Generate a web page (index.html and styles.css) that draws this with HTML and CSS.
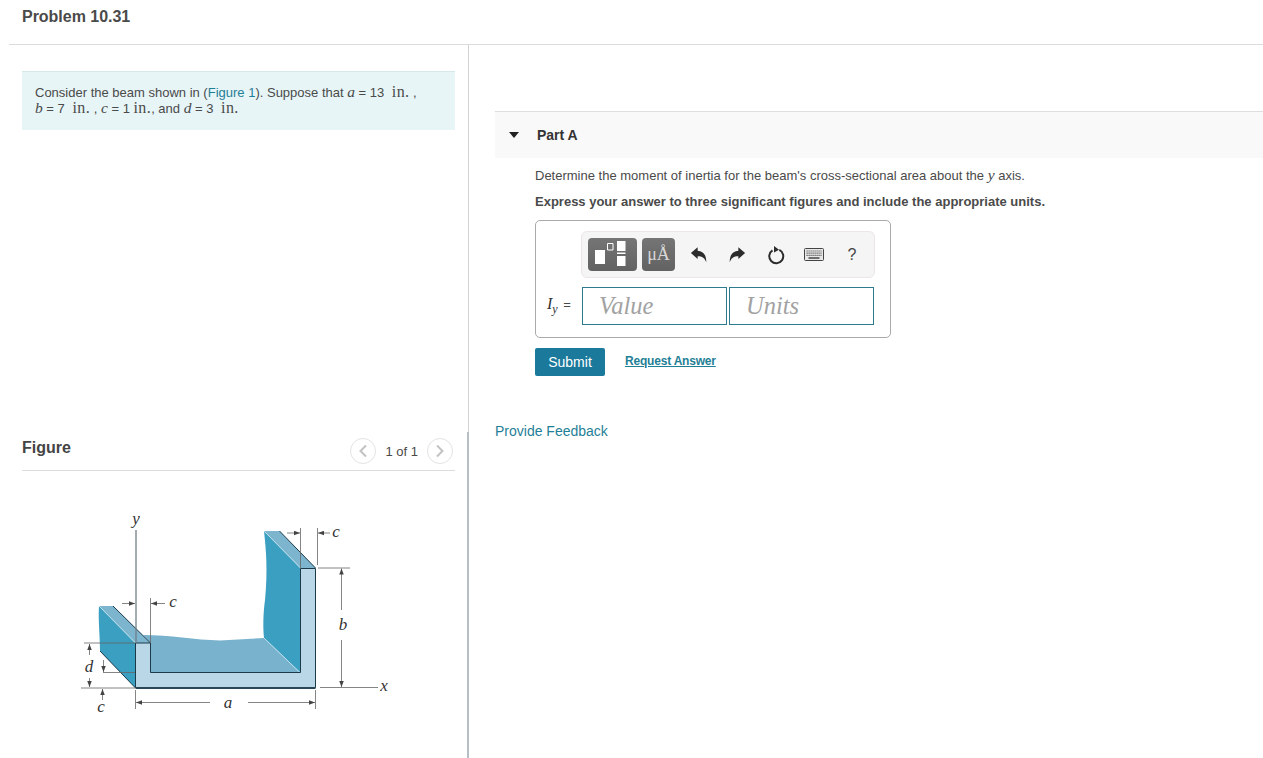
FILE: index.html
```html
<!DOCTYPE html>
<html lang="en">
<head>
<meta charset="utf-8">
<title>Problem 10.31</title>
<link rel="stylesheet" href="styles.css">
</head>
<body>
<header class="top"><h1 class="title">Problem 10.31</h1></header>
<main class="split">
  <section class="left">
    <div class="intro">
      <p class="intro-text">Consider the beam shown in (<a class="link" href="#fig">Figure 1</a>). Suppose that <i class="m">a</i> = 13 <span class="u">in.</span> ,<br><i class="m">b</i> = 7 <span class="u">in.</span> , <i class="m">c</i> = 1 <span class="u0">in.</span>, and <i class="m">d</i> = 3 <span class="u">in.</span></p>
    </div>
    <div class="figure" id="fig">
      <div class="fig-head">
        <h2 class="fig-title">Figure</h2>
        <div class="pager">
          <span class="pg-btn"><svg viewBox="0 0 10 14" class="chev"><path d="M8 1.500 2.500 7 8 12.500"/></svg></span>
          <span class="pg-text">1 of 1</span>
          <span class="pg-btn"><svg viewBox="0 0 10 14" class="chev"><path d="M2 1.500 7.500 7 2 12.500"/></svg></span>
        </div>
      </div>
      <svg class="beam" viewBox="60 500 340 225" width="340" height="225">
        <defs>
          <marker id="ah" viewBox="0 0 8 6" refX="8" refY="3" markerWidth="6" markerHeight="5" orient="auto-start-reverse" markerUnits="userSpaceOnUse"><path d="M0 0 8 3 0 6z" class="ahead"/></marker>
        </defs>
        <path class="f-dark" d="M264 531 C266 550 268 570 265 600 C263 615 263 628 264 638 L300.5 673 V568z"/>
        <path class="f-top" d="M264 531H279.5L315.5 568H300.5z"/>
        <path class="f-floor" d="M143 635 C170 635 195 640 220 640.500 L264 638 L300.500 673 H150.500 V643z"/>
        <path class="f-dark" d="M99 606 C98 620 100 635 100 651 L135.500 688 V643z"/>
        <path class="f-top" d="M99 606H113L150.500 643H135.500z"/>
        <path class="f-front" d="M135.500 643H150.500V673H300.500V568H315.500V688H135.500z"/>
        <path class="hl" d="M264 638 300.500 673M99 606 135.500 643M264 531 300.500 568"/>
        <path class="edge" d="M279.500 531 315.500 568M113 606 150.500 643M100 651 135.500 688"/>
        <path class="edge" d="M150.500 643V672.500H300.500V568.500H315.500V687.500H135.500V643H150.500"/>
        <path class="edge-b" d="M135.500 688H315.500"/>
        <path class="axis" d="M136 530V643"/>
        <path class="thin" d="M300.500 528V568M317.500 528V565M150.500 598V643M84 643H135M81 688H135M103 672.500H135M318 568H350M320 687.500H378M135.500 690V709M315.500 690V709"/>
        <path class="thin" marker-end="url(#ah)" d="M287 533H300"/>
        <path class="thin" marker-end="url(#ah)" d="M330 533H318"/>
        <path class="thin" marker-end="url(#ah)" d="M122 603.500H135"/>
        <path class="thin" marker-end="url(#ah)" d="M165 603.500H151"/>
        <path class="thin" marker-end="url(#ah)" d="M341.500 610V568.500"/>
        <path class="thin" marker-end="url(#ah)" d="M341.500 640V687"/>
        <path class="thin" marker-end="url(#ah)" d="M89.500 655V644"/>
        <path class="thin" marker-end="url(#ah)" d="M89.500 678V687"/>
        <path class="thin" marker-end="url(#ah)" d="M103.500 660V672"/>
        <path class="thin" marker-end="url(#ah)" d="M102.500 700V689"/>
        <path class="thin" marker-end="url(#ah)" d="M210 702.500H136"/>
        <path class="thin" marker-end="url(#ah)" d="M248 702.500H315"/>
        <text class="lbl" x="136" y="524" text-anchor="middle">y</text>
        <text class="lbl" x="336" y="537" text-anchor="middle">c</text>
        <text class="lbl" x="173" y="607" text-anchor="middle">c</text>
        <text class="lbl" x="343" y="630" text-anchor="middle">b</text>
        <text class="lbl" x="89" y="672" text-anchor="middle">d</text>
        <text class="lbl" x="384" y="691" text-anchor="middle">x</text>
        <text class="lbl" x="101" y="712" text-anchor="middle">c</text>
        <text class="lbl" x="228" y="708" text-anchor="middle">a</text>
      </svg>
    </div>
  </section>
  <section class="right">
    <div class="part-head">
      <span class="tri"></span>
      <h2 class="part-title">Part A</h2>
    </div>
    <div class="part-body">
      <p class="q">Determine the moment of inertia for the beam's cross-sectional area about the <i class="m">y</i> axis.</p>
      <p class="q strong">Express your answer to three significant figures and include the appropriate units.</p>
      <div class="answer">
        <div class="toolbar">
          <span class="tool-btn wide">
            <svg viewBox="0 0 49 33" width="49" height="33" class="tpl">
              <path class="w" d="M7 12h10v14H7zM29 3h8.500v10H29zM29 14.500h8.500v1.500H29zM29 18h8.500v10H29z"/>
              <path class="hollow" d="M19.500 5.500h5.500v6.500h-5.500z"/>
            </svg>
          </span>
          <span class="tool-btn unit">μÅ</span>
          <span class="tool-ic ic1"><svg viewBox="0 0 16 16" width="18" height="18" class="solid"><path d="M.8 6.200 6.800 1v3.200c4.700.2 7.700 3.300 7.700 10.300-1.300-3.800-3.600-5.500-7.700-5.500V11.600z"/></svg></span>
          <span class="tool-ic ic2"><svg viewBox="0 0 16 16" width="18" height="18" class="solid"><path d="M15.200 6.200 9.200 1v3.200C4.500 4.400 1.500 7.500 1.500 14.500 2.800 10.700 5.100 9 9.200 9v2.600z"/></svg></span>
          <span class="tool-ic ic3"><svg viewBox="0 0 18 20" width="18" height="20" class="ring"><path d="M5.500 5.300a7 7 0 1 0 6.800-.4"/><path class="solid-p" d="M7 1l5 3.800-5 2.700z"/></svg></span>
          <span class="tool-ic ic4"><svg viewBox="0 0 20 13" width="20" height="13" class="kbd"><rect x=".5" y=".5" width="19" height="12" rx="1"/><path class="dots" d="M2.500 3h15M2.500 5.200h15M2.500 7.400h15"/><path class="bar" d="M4.500 10h11"/></svg></span>
          <span class="tool-ic ic5">?</span>
        </div>
        <div class="inputs">
          <label class="var"><i class="m big">I<sub class="sub">y</sub></i> =</label>
          <div class="field">Value</div>
          <div class="field">Units</div>
        </div>
      </div>
      <div class="actions">
        <button class="submit" type="button">Submit</button>
        <a class="req" href="#req">Request Answer</a>
      </div>
    </div>
    <a class="feedback" href="#fb">Provide Feedback</a>
  </section>
</main>
</body>
</html>
```

FILE: styles.css
```css
* { box-sizing: border-box; }
html, body { margin: 0; height: 758px; overflow: hidden; }
body { font-family: "Liberation Sans", Arial, sans-serif; color: #4a4a4a; background: #fff; font-size: 13px; }
p, h1, h2 { margin: 0; }

.top { height: 45px; margin-left: 9px; border-bottom: 1px solid #dcdcdc; padding: 7px 0 0 13px; }
.title { font-size: 16px; line-height: 19px; font-weight: 700; color: #4a4a4a; letter-spacing: -.02px; }

.split { display: flex; height: 713px; }
.left { width: 469px; flex: none; border-right: 1px solid #d2d2d2; display: flex; flex-direction: column; }
.intro { margin: 26px 13px 0 22px; height: 59px; background: #e7f5f7; border-top: 1px solid #d6e8ea; padding: 13px 13px 0; }
.intro-text { font-size: 13px; line-height: 16px; }
.link { color: #1f7f96; text-decoration: none; }
.m { font-family: "Liberation Serif", serif; font-style: italic; font-size: 15.5px; line-height: 0; }
.u { font-family: "Liberation Serif", serif; font-size: 16px; letter-spacing: .4px; margin-left: 4px; line-height: 0; }
.u0 { font-family: "Liberation Serif", serif; font-size: 16px; letter-spacing: .4px; line-height: 0; }

.figure { margin-top: 302px; margin-right: -1px; flex: 1; border-right: 2px solid #b7bfc6; padding-left: 22px; }
.fig-head { width: 433px; height: 39px; border-bottom: 1px solid #dcdcdc; display: flex; justify-content: space-between; padding: 7px 2px 0 0; }
.fig-title { font-size: 16px; line-height: 18px; font-weight: 700; color: #444; }
.pager { display: flex; align-items: flex-start; gap: 9px; margin-top: -1px; }
.pg-text { font-size: 13px; line-height: 28px; color: #4a4a4a; }
.pg-btn { width: 26px; height: 26px; border: 1px solid #e3e3e3; border-radius: 50%; display: flex; align-items: center; justify-content: center; }
.chev { width: 10px; height: 14px; fill: none; stroke: #c2c2c2; stroke-width: 2; }
.beam { display: block; margin: 29px 0 0 38px; }
.f-dark { fill: #3a9fc0; }
.f-top { fill: #7db5cf; }
.f-floor { fill: #79b2cd; }
.f-front { fill: #b9d7e6; }
.hl { fill: none; stroke: #bfe0ec; stroke-width: 1; }
.edge { fill: none; stroke: #1d3a4a; stroke-width: 1; }
.edge-b { fill: none; stroke: #2b4656; stroke-width: 2; }
.axis { fill: none; stroke: #6f7c84; stroke-width: 1.500; opacity: .85; }
.thin { fill: none; stroke: #666; stroke-width: .8; }
.ahead { fill: #444; }
.lbl { font-family: "Liberation Serif", serif; font-style: italic; font-size: 17px; fill: #333; }

.right { flex: 1; padding: 66px 0 0 26px; min-width: 0; }
.part-head { height: 47px; background: #f9f9f9; border-top: 1px solid #dedede; display: flex; align-items: center; padding-left: 14px; }
.tri { width: 0; height: 0; border-left: 5.500px solid transparent; border-right: 5.500px solid transparent; border-top: 6.500px solid #222; }
.part-title { font-size: 14px; font-weight: 700; color: #333; margin-left: 18px; }
.part-body { margin-left: 40px; padding-top: 9px; }
.q { font-size: 13px; line-height: 17px; }
.strong { font-weight: 700; margin-top: 9px; }
.answer { width: 356px; height: 118px; margin-top: 10px; border: 1px solid #aaa; border-radius: 5px; padding: 10px 16px 0 45px; }
.toolbar { width: 294px; height: 47px; background: #f5f5f5; border: 1px solid #ece6e6; border-radius: 6px; display: flex; align-items: center; padding-left: 6px; }
.tool-btn { height: 33px; border-radius: 4px; background: linear-gradient(#757575, #626262); display: flex; align-items: center; justify-content: center; color: #d8d8d8; }
.wide { width: 49px; }
.unit { width: 33px; margin-left: 5px; font-family: "Liberation Serif", serif; font-size: 18px; }
.tpl .w { fill: #fff; }
.tpl .hollow { fill: none; stroke: #fff; stroke-width: 1; }
.tool-ic { display: flex; align-items: center; justify-content: center; width: 20px; }
.ic1 { margin-left: 14px; }
.ic2 { margin-left: 18px; }
.ic3 { margin-left: 19px; }
.ic4 { margin-left: 18px; }
.ic5 { margin-left: 18px; font-size: 16px; color: #444; }
.solid { fill: #2c2c2c; }
.ring { fill: none; stroke: #2c2c2c; stroke-width: 2; }
.solid-p { fill: #2c2c2c; stroke: none; }
.kbd rect { fill: #e8e8e8; stroke: #444; stroke-width: 1; }
.dots { fill: none; stroke: #555; stroke-width: 1.200; stroke-dasharray: 1.200 .8; }
.bar { fill: none; stroke: #444; stroke-width: 1.500; }
.inputs { position: relative; display: flex; gap: 2px; margin: 9px 0 0 1px; }
.var { position: absolute; left: -35px; top: 9px; font-size: 13px; line-height: 18px; white-space: nowrap; }
.big { font-size: 16px; color: #333; margin-right: 2px; }
.sub { font-size: 12px; line-height: 0; }
.field { width: 145px; height: 38px; border: 1px solid #2d7b8c; padding-left: 16px; font-family: "Liberation Serif", serif; font-style: italic; font-size: 24.500px; line-height: 35px; color: #a2a2a2; }
.actions { display: flex; align-items: center; margin-top: 10px; }
.submit { width: 70px; height: 28px; border: 0; border-radius: 2px; background: #1b7a9b; color: #fff; font: 14px "Liberation Sans", Arial, sans-serif; padding: 0; }
.req { margin: 0 0 2px 20px; font-size: 12px; font-weight: 700; letter-spacing: -.2px; color: #1f7f96; }
.feedback { display: block; margin-top: 47px; font-size: 14px; line-height: 16px; color: #1f7f96; text-decoration: none; }
```
